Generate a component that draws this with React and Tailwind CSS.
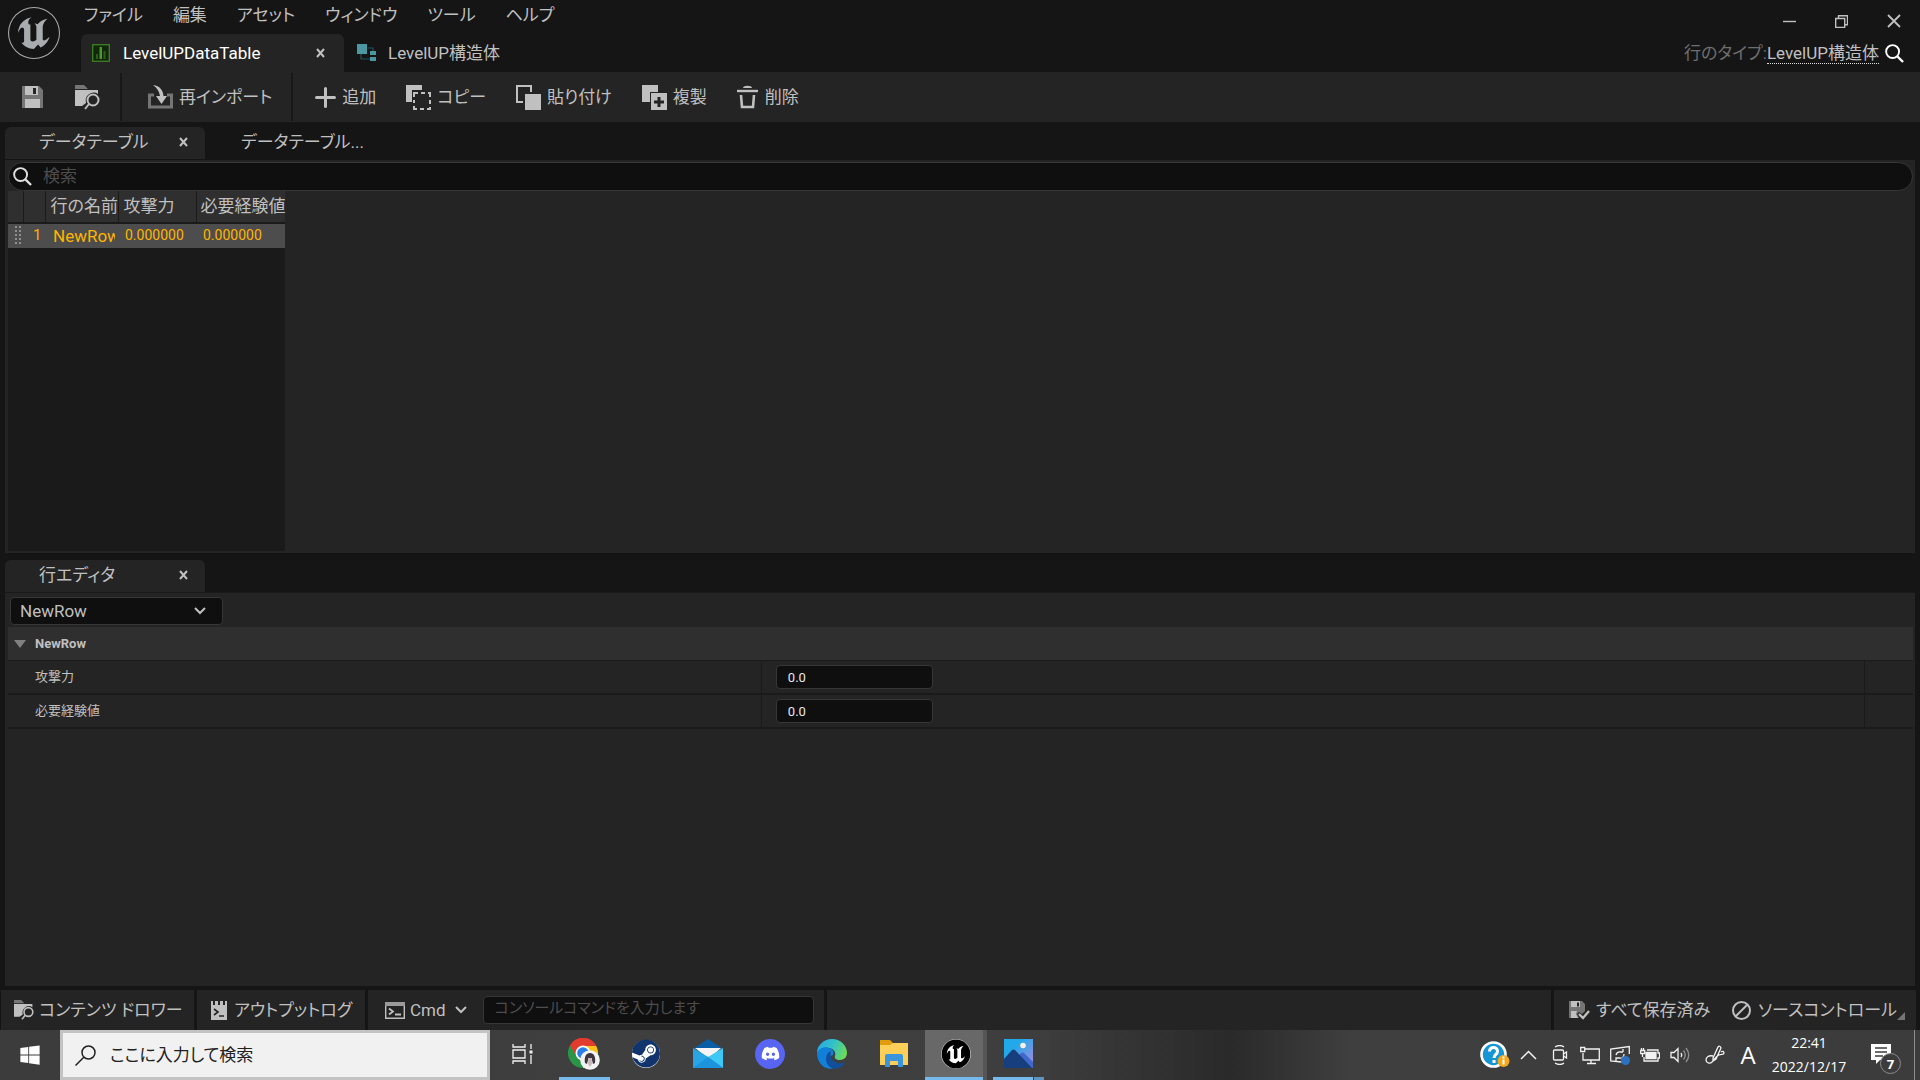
import React, { useState } from 'react';
import { FaDiscord, FaSteam, FaWindows } from 'react-icons/fa';
import { SiUnrealengine } from 'react-icons/si';

const menuItems = ['ファイル', '編集', 'アセット', 'ウィンドウ', 'ツール', 'ヘルプ'];

const properties = [
  { id: 'attack', label: '攻撃力' },
  { id: 'exp', label: '必要経験値' },
];

/* ---------- editor icons ---------- */

const CloseX = () => (
  <svg width="9" height="10" viewBox="0 0 9 10" stroke="currentColor" strokeWidth="2">
    <path d="M1 1 8 9M8 1 1 9" />
  </svg>
);

const Chevron = () => (
  <svg width="12" height="8" viewBox="0 0 12 8" fill="none" stroke="#c0c0c0" strokeWidth="2">
    <path d="M1 1l5 5 5-5" />
  </svg>
);

const SearchIcon = ({ size = 20, color = '#e0e0e0' }) => (
  <svg width={size} height={size} viewBox="0 0 20 20" fill="none" stroke={color} strokeWidth="2">
    <circle cx="8" cy="8" r="6.8" />
    <path d="M13 13l6 6" strokeWidth="2.4" />
  </svg>
);

const TableIcon = () => (
  <svg width="18" height="18" viewBox="0 0 18 18">
    <rect x="0.7" y="0.7" width="16.6" height="16.6" fill="#12260c" stroke="#397a22" strokeWidth="1.4" />
    <path d="M4 10h2v5H4zM11.500 7h2v8h-2z" fill="#2c5f1b" />
    <path d="M7.500 3h2.500v12H7.500z" fill="#4a9a2c" />
  </svg>
);

const StructIcon = () => (
  <svg width="20" height="18" viewBox="0 0 20 18">
    <path d="M10 4h6v4M4 10v5h9" fill="none" stroke="#23525a" strokeWidth="1.2" />
    <path d="M0 0h10v10H0zM13 7h6v4h-6zM13 13h6v4h-6z" fill="#4b98a3" />
  </svg>
);

const SaveIcon = () => (
  <svg width="23" height="24" viewBox="0 0 23 24">
    <path d="M1 1h17l4 4v18H1z" fill="#757575" />
    <path d="M4 1h13v9H4zM4 14h15v9H4z" fill="#c0c0c0" />
    <path d="M12 3h3v6h-3z" fill="#242424" />
  </svg>
);

const FolderSearchIcon = ({ size = 25 }) => (
  <svg width={size} height={size} viewBox="0 0 25 25">
    <path d="M0 4V0h9l4 4z" fill="#757575" />
    <path d="M0 5h23v4a8 8 0 0 0-12 9l-4 3H0z" fill="#c0c0c0" />
    <g fill="none" stroke="#c0c0c0" strokeWidth="2">
      <circle cx="18" cy="15" r="5.500" />
      <path d="M14 19l-4 5" />
    </g>
  </svg>
);

const ReimportIcon = () => (
  <svg width="25" height="24" viewBox="0 0 25 24">
    <path d="M6 10H1.500v12h22V10H19" fill="none" stroke="#757575" strokeWidth="3" />
    <path d="M5 0c7 1 10 5 10.500 11H19l-5.500 8L8 11h4C11 6 9 3 5 0z" fill="#c0c0c0" />
  </svg>
);

const PlusIcon = () => (
  <svg width="21" height="21" viewBox="0 0 21 21" stroke="#c0c0c0" strokeWidth="3" strokeLinecap="round">
    <path d="M10.500 1.500v18M1.500 10.500h18" />
  </svg>
);

const CopyIcon = () => (
  <svg width="25" height="25" viewBox="0 0 25 25">
    <path d="M0 0h16v5H6v12H0z" fill="#c0c0c0" />
    <path d="M8 12V8h4M15 8h4M22 8h2v4M24 15v4M24 22v2h-3M18 24h-4M11 24H8v-3M8 18v-3" fill="none" stroke="#c0c0c0" strokeWidth="2" />
  </svg>
);

const PasteIcon = () => (
  <svg width="25" height="25" viewBox="0 0 25 25">
    <path d="M7 17H1V1h14v6" fill="none" stroke="#c0c0c0" strokeWidth="2" />
    <path d="M9 9h16v16H9z" fill="#c0c0c0" />
  </svg>
);

const DuplicateIcon = () => (
  <svg width="25" height="25" viewBox="0 0 25 25">
    <path d="M0 0h16v7H8v10H0z" fill="#c0c0c0" />
    <path d="M9 8h16v17H9z" fill="#c0c0c0" />
    <path d="M15.500 12h3v3.500H22v3h-3.500V22h-3v-3.500H12v-3h3.500z" fill="#242424" />
  </svg>
);

const TrashIcon = () => (
  <svg width="22" height="24" viewBox="0 0 22 24" fill="none" stroke="#c0c0c0">
    <path d="M6 3c0-3 9-3 9 0z" fill="#c0c0c0" stroke="none" />
    <path d="M0 6h21" strokeWidth="2.400" />
    <path d="M4 10l1 12h11l1-12" strokeWidth="2.600" />
  </svg>
);

const LogIcon = () => (
  <svg width="16" height="20" viewBox="0 0 16 20">
    <path d="M0 1h2v4h2V1h3v4h2V1h3v4h2V1h2v19H0z" fill="#c0c0c0" />
    <path d="M3 9l4 3-4 3M8 16h5" fill="none" stroke="#242424" strokeWidth="1.600" />
  </svg>
);

const CmdIcon = () => (
  <svg width="20" height="17" viewBox="0 0 20 17" fill="none" stroke="#c0c0c0" strokeWidth="1.400">
    <path d="M0.700 0.700h18.600v15.600H0.700z" />
    <path d="M0 2h20" strokeWidth="4" stroke="#9a9a9a" />
    <path d="M4 6.500l4 3-4 3M10 12.500h6" strokeWidth="1.800" />
  </svg>
);

const SavedIcon = () => (
  <svg width="21" height="19" viewBox="0 0 21 19">
    <path d="M0 0h13l3 3v7l-3 3-3-2-2 2 2 4H0z" fill="#757575" />
    <path d="M2 0h9v6H2zM2 10h6l-1 3 2 4H2z" fill="#c0c0c0" />
    <path d="M8 1.500h2v4H8z" fill="#242424" />
    <path d="M10 13l4 4 6-7" fill="none" stroke="#c0c0c0" strokeWidth="2.400" />
  </svg>
);

const NoSourceIcon = () => (
  <svg width="19" height="19" viewBox="0 0 19 19" fill="none" stroke="#c0c0c0" strokeWidth="2">
    <circle cx="9.500" cy="9.500" r="8.500" />
    <path d="M3.500 15.500l12-12" />
  </svg>
);

/* ---------- taskbar icons ---------- */

const TaskViewIcon = () => (
  <svg width="21" height="20" viewBox="0 0 21 20" fill="none" stroke="#f2f2f2" strokeWidth="1.300">
    <path d="M1 0v3h12V0M1 20v-3h12v3M1 6h12v8H1zM19 0v5M19 11v9" />
    <path d="M17.500 6.500h3v3h-3z" fill="#f2f2f2" stroke="none" />
  </svg>
);

const ChromeIcon = () => (
  <svg width="32" height="32" viewBox="0 0 32 32">
    <path d="M15 15L2 7.500A15 15 0 0 1 28 7.500z" fill="#e33b2e" />
    <path d="M15 15L2 7.500A15 15 0 0 0 15 30z" fill="#2a9447" />
    <path d="M15 15V30A15 15 0 0 0 28 7.500H15z" fill="#fbc116" />
    <path d="M15 8h13.200A15 15 0 0 0 2 7.500L8.500 18z" fill="#e33b2e" />
    <circle cx="15" cy="15" r="7.500" fill="#fff" />
    <circle cx="15" cy="15" r="5.800" fill="#2b7de9" />
    <circle cx="22" cy="22" r="9.800" fill="#f3f3f3" />
    <path d="M17 25c-1-6 1-10 5-10s6 4 5 10l-2 1-1-4h-4l-1 4z" fill="#3c3540" />
    <path d="M20 20h4v6l-2 3-2-3z" fill="#c9bdbb" />
  </svg>
);

const MailIcon = () => (
  <svg width="30" height="29" viewBox="0 0 30 29">
    <path d="M0 10L15 0l15 10z" fill="#0a5ea8" />
    <path d="M2 9h26L16 20z" fill="#f4f4f4" />
    <path d="M0 9l17 10L30 29H0z" fill="#27a5e5" />
    <path d="M30 9L15 18l15 11z" fill="#3dc8f5" />
    <path d="M0 29h30L15 18z" fill="#1d93dc" />
  </svg>
);

const EdgeIcon = () => (
  <svg width="30" height="30" viewBox="0 0 30 30">
    <defs>
      <linearGradient id="edgeTop" x1="0" x2="1" y1="0.300" y2="0.600">
        <stop offset="0" stopColor="#27a9e6" />
        <stop offset="0.500" stopColor="#33c3c6" />
        <stop offset="1" stopColor="#6fdc53" />
      </linearGradient>
    </defs>
    <path d="M15 0C6 0 0 7 0 14c3-5 8-6 12-5 5 1 7 4 6 8-1 2 1 4 5 4 5 0 7-4 7-7C30 6 23 0 15 0z" fill="url(#edgeTop)" />
    <path d="M0 14C2 9 8 7 12 9c4 1 5 4 4 7-5 1-6 9 1 13-9 3-17-5-17-15z" fill="#1180d8" />
    <path d="M14 12c-6 2-7 12-1 16 6 4 13 0 15-5-3 2-8 2-11-1-3-2-4-6-3-10z" fill="#114f9c" />
  </svg>
);

const ExplorerIcon = () => (
  <svg width="28" height="27" viewBox="0 0 28 27">
    <path d="M0 0h10l3 3v5H0z" fill="#e09c0a" />
    <path d="M0 5h10l3-2h15v22H0z" fill="#fccf58" />
    <path d="M5 27V16q0-2 2-2h14q2 0 2 2v11h-5v-6h-8v6z" fill="#3b95dc" />
  </svg>
);

const UnrealIcon = () => (
  <span className="flex items-center justify-center size-[30px] rounded-full bg-black text-white">
    <SiUnrealengine size={30} />
  </span>
);

const PhotosIcon = () => (
  <svg width="29" height="29" viewBox="0 0 29 29">
    <defs>
      <linearGradient id="photosSky" x1="0" x2="1" y1="0" y2="1">
        <stop offset="0.300" stopColor="#22a9ea" />
        <stop offset="0.800" stopColor="#8a8fe0" />
      </linearGradient>
    </defs>
    <path d="M0 0h29v29H0z" fill="url(#photosSky)" />
    <path d="M12 20l5-6q2-1 3 0l9 9v6H12z" fill="#3f69cc" />
    <path d="M0 20L8 11q2-1 3 0l17 18H0z" fill="#173f7d" />
    <circle cx="19" cy="6.500" r="2.800" fill="#f6f1ea" />
  </svg>
);

const DiscordIcon = () => (
  <span className="flex items-center justify-center size-[30px] rounded-full bg-[#5865f2] text-white">
    <FaDiscord size={19} />
  </span>
);

const SteamIcon = () => (
  <span className="flex items-center justify-center size-[28px] rounded-full bg-white">
    <FaSteam size={29} color="#10346b" />
  </span>
);

const apps = [
  { name: 'Task View', icon: <TaskViewIcon /> },
  { name: 'Chrome', icon: <ChromeIcon />, open: true },
  { name: 'Steam', icon: <SteamIcon /> },
  { name: 'Mail', icon: <MailIcon /> },
  { name: 'Discord', icon: <DiscordIcon /> },
  { name: 'Edge', icon: <EdgeIcon /> },
  { name: 'Explorer', icon: <ExplorerIcon /> },
  { name: 'Unreal Editor', icon: <UnrealIcon />, active: true },
  { name: 'Photos', icon: <PhotosIcon />, open: true, stacked: true },
];

const HelpIcon = () => (
  <svg width="30" height="28" viewBox="0 0 30 28" fill="none">
    <circle cx="13.500" cy="13.500" r="12" fill="#1595d4" stroke="#fff" strokeWidth="2.600" />
    <path d="M9.500 10.500c0-5.500 8-5.500 8 0 0 3-3.500 3-3.500 6.500" stroke="#fff" strokeWidth="3" />
    <path d="M12.500 19h3v3h-3z" fill="#fff" />
    <circle cx="23.500" cy="20" r="6" fill="#f5a81c" />
    <path d="M23.500 18.500v5M23.500 15.500v2" stroke="#fff" strokeWidth="2" />
  </svg>
);

const trayIcons = [
  {
    name: 'meet now',
    path: (
      <>
        <path d="M5 2q5-3 9 0M5 18q5 3 9 0" />
        <rect x="3.500" y="5" width="10" height="10" rx="1" />
        <path d="M13.500 9l3-2v6l-3-2" />
      </>
    ),
  },
  { name: 'network', path: <path d="M5 4h14.300v11H3V8M0.700 2.500h4v4h-4zM11 15v4M7 18.500h9" /> },
  {
    name: 'update',
    path: (
      <>
        <path d="M19.300 9V1.500L0.700 4v12l11 1" />
        <path d="M6 10q1-4 5-3h2M13 4v3M14 9q0 5-5 4H6v3" />
        <circle cx="15.500" cy="15.500" r="4.500" fill="#2d72c0" stroke="none" />
      </>
    ),
  },
  {
    name: 'battery',
    path: (
      <>
        <path d="M7 5h11v3h1.500v5H18v3H4v-4M0.700 5.500h4v3h-4zM1.500 3v2M3.500 3v2M2.500 9v3" />
        <path d="M6 7.500h10v6H6z" fill="#f2f2f2" />
      </>
    ),
  },
  {
    name: 'volume',
    path: (
      <>
        <path d="M1 7.500h3l4-4v13l-4-4H1zM11 8q1.500 2 0 4" />
        <path d="M13.500 5.500q3.500 4.500 0 9M16 3q5.500 7 0 14" stroke="#8f8f8f" />
      </>
    ),
  },
];

const PenIcon = () => (
  <svg width="20" height="20" viewBox="0 0 20 20" fill="none" stroke="#f2f2f2" strokeWidth="1.300">
    <path d="M8 13L13 2q2-2 3 1l-5 11-3 2zM8 11c-4-1-7 1-7 4s4 4 6 2 4-6 7-7 5 0 5-2-2-2-3-1" />
  </svg>
);

/* ---------- shared pieces ---------- */

const ToolButton = ({ icon, label }) => (
  <button className="flex items-center gap-1.5 whitespace-nowrap">
    {icon}
    <span>{label}</span>
  </button>
);

const PanelTab = ({ label }) => (
  <div className="flex items-center justify-between w-[200px] h-8 pl-[34px] pr-[17px] pb-0.5 rounded-t-md bg-[#242424]">
    <span>{label}</span>
    <button aria-label="閉じる">
      <CloseX />
    </button>
  </div>
);

const Header = () => (
  <header className="flex h-[72px]">
    <div className="w-[81px] pl-2 pt-[7px] text-[#a8acae]">
      <SiUnrealengine size={52} />
    </div>
    <div className="flex-1">
      <nav className="flex items-center gap-[30px] h-[34px] pl-[3px] pb-1">
        {menuItems.map((item) => (
          <button key={item}>{item}</button>
        ))}
      </nav>
      <div className="flex items-center h-[38px]">
        <div className="flex items-center w-[263px] h-full pl-[11px] pr-[19px] rounded-t-md bg-[#242424] text-white">
          <TableIcon />
          <span className="flex-1 ml-[13px]">LevelUPDataTable</span>
          <button aria-label="閉じる" className="text-[#c0c0c0]">
            <CloseX />
          </button>
        </div>
        <div className="flex items-center gap-[11px] ml-[13px]">
          <StructIcon />
          <span>LevelUP構造体</span>
        </div>
      </div>
    </div>
    <div className="pr-4">
      <div className="flex items-center justify-end gap-[39px] h-[38px] pt-1 pr-[3px]">
        <button aria-label="最小化">
          <svg width="13" height="13" viewBox="0 0 13 13" stroke="#c0c0c0" strokeWidth="1.400">
            <path d="M0 6.500h13" />
          </svg>
        </button>
        <button aria-label="元に戻す">
          <svg width="13" height="13" viewBox="0 0 13 13" fill="none" stroke="#c0c0c0" strokeWidth="1.400">
            <path d="M0.700 3.500h9v9h-9zM3.500 3.500V0.700h9v9H9.700" />
          </svg>
        </button>
        <button aria-label="閉じる">
          <svg width="14" height="14" viewBox="0 0 14 14" stroke="#c0c0c0" strokeWidth="1.800">
            <path d="M1 1l12 12M13 1L1 13" />
          </svg>
        </button>
      </div>
      <div className="flex items-center h-7 pt-0.5">
        <span className="text-[#6e6e6e]">行のタイプ:</span>
        <a href="#" className="mr-1.5 border-b border-dotted border-[#e0e0e0]">
          LevelUP構造体
        </a>
        <button aria-label="検索">
          <SearchIcon size={19} color="#ffffff" />
        </button>
      </div>
    </div>
  </header>
);

const Toolbar = () => (
  <div className="flex items-center h-[50px] pl-[21px] bg-[#242424]">
    <button aria-label="保存">
      <SaveIcon />
    </button>
    <button aria-label="参照" className="ml-[31px]">
      <FolderSearchIcon />
    </button>
    <div className="w-0.5 h-12 ml-5 mr-[26px] bg-[#181818]" />
    <ToolButton icon={<ReimportIcon />} label="再インポート" />
    <div className="w-0.5 h-12 ml-[19px] mr-[22px] bg-[#181818]" />
    <div className="flex items-center gap-[30px]">
      <ToolButton icon={<PlusIcon />} label="追加" />
      <ToolButton icon={<CopyIcon />} label="コピー" />
      <ToolButton icon={<PasteIcon />} label="貼り付け" />
      <ToolButton icon={<DuplicateIcon />} label="複製" />
      <ToolButton icon={<TrashIcon />} label="削除" />
    </div>
  </div>
);

const DataTablePanel = () => (
  <section className="flex flex-col">
    <div className="flex items-center">
      <PanelTab label="データテーブル" />
      <span className="ml-9 pb-0.5">データテーブル...</span>
    </div>
    <div className="flex flex-col flex-1 mt-px pl-[3px] pr-0.5 py-0.5 bg-[#242424]">
      <div className="flex items-center gap-[11px] h-[29px] pl-1 rounded-full border border-[#363636] bg-[#0f0f0f]">
        <SearchIcon size={19} />
        <input
          aria-label="検索"
          placeholder="検索"
          className="flex-1 pb-0.5 bg-transparent outline-none placeholder:text-[#4d4d4d]"
        />
      </div>
      <div className="flex-1 w-[277px] bg-[#1a1a1a]">
        <table className="table-fixed w-[277px] text-left border-collapse">
          <colgroup>
            <col className="w-[15px]" />
            <col className="w-[22px]" />
            <col className="w-[73px]" />
            <col className="w-[78px]" />
            <col className="w-[89px]" />
          </colgroup>
          <thead>
            <tr className="h-8 bg-[#2f2f2f] border-b-2 border-[#1a1a1a]">
              <th className="border-r border-[#1a1a1a]" />
              <th className="border-r border-[#1a1a1a]" />
              <th className="pl-[5px] pb-0.5 font-normal whitespace-nowrap border-r border-[#1a1a1a]">行の名前</th>
              <th className="pl-[5px] pb-0.5 font-normal whitespace-nowrap border-r border-[#1a1a1a]">攻撃力</th>
              <th className="pl-1 pb-0.5 font-normal whitespace-nowrap">必要経験値</th>
            </tr>
          </thead>
          <tbody>
            <tr className="h-[25px] bg-[#4d4d4d] text-[#ffb400]">
              <td className="pl-[7px]">
                <svg width="6" height="20" viewBox="0 0 6 20" fill="none" stroke="#909090" strokeWidth="2" strokeDasharray="2 2">
                  <path d="M1 0v20M5 0v20" />
                </svg>
              </td>
              <td className="pl-2.5 pb-0.5 text-[15px]">1</td>
              <td className="pl-2 pr-[3px]">
                <div className="overflow-hidden whitespace-nowrap">NewRow</div>
              </td>
              <td className="pl-[7px] pb-0.5 text-[14px]">0.000000</td>
              <td className="pl-[7px] pb-0.5 text-[14px]">0.000000</td>
            </tr>
          </tbody>
        </table>
      </div>
    </div>
  </section>
);

const RowEditorPanel = () => {
  const [values, setValues] = useState({ attack: '0.0', exp: '0.0' });

  return (
    <section className="flex flex-col">
      <PanelTab label="行エディタ" />
      <div className="flex-1 pl-[3px] pr-0.5 pt-1 bg-[#242424] border-t border-[#1a1a1a]">
        <div className="flex items-center w-[213px] h-7 ml-0.5 pr-4 rounded border border-[#363636] bg-[#0f0f0f]">
          <select aria-label="行" className="flex-1 appearance-none pl-[9px] bg-transparent outline-none">
            <option>NewRow</option>
          </select>
          <Chevron />
        </div>
        <button className="flex items-center gap-[9px] w-full h-[34px] mt-0.5 pl-1.5 border-b border-[#1a1a1a] bg-[#2f2f2f] text-[13px] font-bold">
          <svg width="12" height="8" viewBox="0 0 12 8" fill="#808080">
            <path d="M0 0h12L6 8z" />
          </svg>
          NewRow
        </button>
        {properties.map(({ id, label }) => (
          <div key={id} className="grid grid-cols-[15fr_22fr_48px] h-[34px] border-b-2 border-[#1a1a1a] text-[13px]">
            <label htmlFor={id} className="flex items-center pl-[27px]">
              {label}
            </label>
            <div className="flex items-center pl-3.5 border-x border-[#1a1a1a]">
              <input
                id={id}
                value={values[id]}
                onChange={(e) => setValues({ ...values, [id]: e.target.value })}
                className="w-[157px] h-6 px-[11px] rounded border border-[#363636] bg-[#0f0f0f] text-[#e8e8e8] outline-none"
              />
            </div>
            <div />
          </div>
        ))}
      </div>
    </section>
  );
};

const StatusBar = () => (
  <footer className="flex gap-[3px] h-10 mt-1 pl-px pr-1 whitespace-nowrap">
    <button className="flex items-center gap-[5px] w-[193px] pl-[13px] bg-[#242424]">
      <FolderSearchIcon size={20} />
      コンテンツ ドロワー
    </button>
    <button className="flex items-center gap-[7px] w-[168px] pl-3.5 bg-[#242424]">
      <LogIcon />
      アウトプットログ
    </button>
    <div className="flex items-center w-[456px] pl-[17px] bg-[#242424]">
      <button className="flex items-center gap-[5px]">
        <CmdIcon />
        Cmd
        <span className="ml-1">
          <Chevron />
        </span>
      </button>
      <input
        aria-label="コンソールコマンド"
        placeholder="コンソールコマンドを入力します"
        className="w-[331px] h-7 ml-4 px-[11px] pb-1 rounded border border-[#363636] bg-[#0f0f0f] text-[15px] outline-none placeholder:text-[#4d4d4d]"
      />
    </div>
    <div className="flex-1 bg-[#242424]" />
    <div className="flex items-center w-[362px] pl-[15px] bg-[#242424]">
      <button className="flex items-center gap-1.5">
        <SavedIcon />
        すべて保存済み
      </button>
      <button className="flex items-center gap-[7px] ml-[22px]">
        <NoSourceIcon />
        ソースコントロール
      </button>
      <svg width="8" height="8" viewBox="0 0 8 8" fill="#757575" className="self-end mb-2.5">
        <path d="M8 0v8H0z" />
      </svg>
    </div>
  </footer>
);

const TaskbarApp = ({ app }) => (
  <button
    aria-label={app.name}
    className={`flex flex-col items-center w-[62px] h-full ${
      app.active ? 'bg-[#686868] border-r-4 border-[#555555]' : ''
    }`}
  >
    <span className={`flex flex-1 items-center justify-center ${app.active ? 'pl-1' : ''}`}>{app.icon}</span>
    <span className={`flex gap-px h-[3px] ${app.active ? 'w-full' : 'w-[51px]'}`}>
      {(app.open || app.active) && <span className="flex-1 bg-[#76b9ed]" />}
      {app.stacked && <span className="w-2.5 bg-[#5f94bf]" />}
    </span>
  </button>
);

const Taskbar = () => (
  <div className="flex items-center h-[50px] bg-linear-to-r from-[#3c3c3c] via-[#3f3f3f] via-35% to-[#3c3c3c] text-white font-['Open_Sans','Noto_Sans_CJK_JP',sans-serif]">
    <button aria-label="スタート" className="flex justify-center w-[60px]">
      <FaWindows size={22} />
    </button>
    <div className="flex items-center gap-3.5 w-[430px] h-full mr-px pl-3 border-[3px] border-[#c3c3c3] bg-[#f1f1f1] text-[#222222]">
      <svg width="21" height="21" viewBox="0 0 21 21" fill="none" stroke="#222222" strokeWidth="1.500">
        <circle cx="13.500" cy="7.500" r="6.500" />
        <path d="M9 12l-8.500 8.500" />
      </svg>
      <input
        aria-label="検索"
        placeholder="ここに入力して検索"
        className="flex-1 outline-none placeholder:text-[#222222]"
      />
    </div>
    {apps.map((app) => (
      <TaskbarApp key={app.name} app={app} />
    ))}
    {/* wallpaper showing through between the apps and the tray */}
    <div className="flex-1 h-full bg-linear-to-r from-[#3c3c3c] via-[#2a2a2a] via-42% to-[#3f3f3f] to-70%" />
    <div className="flex items-center h-full">
      <HelpIcon />
      <svg width="17" height="10" viewBox="0 0 17 10" fill="none" stroke="#f2f2f2" strokeWidth="1.500" className="ml-2.5 mr-2">
        <path d="M1 9l7.500-7.500L16 9" />
      </svg>
      {trayIcons.map(({ name, path }) => (
        <button key={name} aria-label={name} className="flex justify-center w-[30px]">
          <svg width="20" height="20" viewBox="0 0 20 20" fill="none" stroke="#f2f2f2" strokeWidth="1.300">
            {path}
          </svg>
        </button>
      ))}
      <button aria-label="ペン" className="ml-2.5">
        <PenIcon />
      </button>
      <span className="w-[46px] text-center text-[24px]">A</span>
      <div className="w-[76px] text-[14px] leading-6 text-center whitespace-nowrap">
        <div>22:41</div>
        <div>2022/12/17</div>
      </div>
      <button aria-label="通知" className="ml-6 mr-[13px] pt-2">
        <svg width="30" height="32" viewBox="0 0 30 32">
          <path d="M0 1h20v16H9l-4 4v-4H0z" fill="#ffffff" />
          <path d="M4 5h12M4 9h12M4 13h8" stroke="#3c3c3c" strokeWidth="1.300" />
          <circle cx="19.500" cy="20.500" r="10" fill="#3c3c3c" stroke="#8c8c8c" />
          <text x="19.500" y="25.500" fill="#ffffff" fontSize="13" fontWeight="bold" textAnchor="middle">7</text>
        </svg>
      </button>
      <div className="w-1.5 h-full border-l border-[#8c8c8c]" />
    </div>
  </div>
);

export default function App() {
  return (
    <div className="flex flex-col min-h-screen bg-[#151515] text-[#c0c0c0] text-[17px] leading-5 font-['Roboto','Noto_Sans_CJK_JP',sans-serif] [font-feature-settings:'palt']">
      <Header />
      <Toolbar />
      <main className="grid auto-rows-fr flex-1 gap-[7px] px-[5px] pt-[5px]">
        <DataTablePanel />
        <RowEditorPanel />
      </main>
      <StatusBar />
      <Taskbar />
    </div>
  );
}
